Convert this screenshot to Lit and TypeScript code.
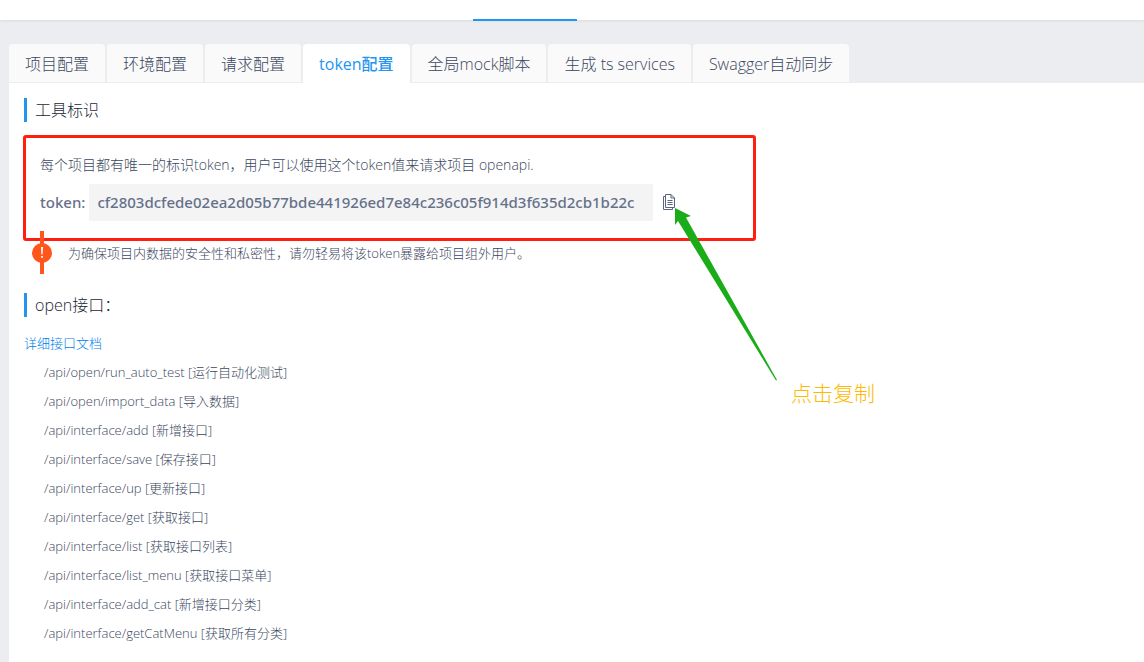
import { LitElement, html, css } from "lit";
import { customElement, state } from "lit/decorators.js";
import { classMap } from "lit/directives/class-map.js";

const TABS = [
  "项目配置",
  "环境配置",
  "请求配置",
  "token配置",
  "全局mock脚本",
  "生成 ts services",
  "Swagger自动同步",
];

const APIS: [string, string][] = [
  ["/api/open/run_auto_test", "运行自动化测试"],
  ["/api/open/import_data", "导入数据"],
  ["/api/interface/add", "新增接口"],
  ["/api/interface/save", "保存接口"],
  ["/api/interface/up", "更新接口"],
  ["/api/interface/get", "获取接口"],
  ["/api/interface/list", "获取接口列表"],
  ["/api/interface/list_menu", "获取接口菜单"],
  ["/api/interface/add_cat", "新增接口分类"],
  ["/api/interface/getCatMenu", "获取所有分类"],
];

const TOKEN = "cf2803dcfede02ea2d05b77bde441926ed7e84c236c05f914d3f635d2cb1b22c";

@customElement("token-panel")
class TokenPanel extends LitElement {
  static styles = css`
    :host {
      display: block;
      position: relative;
      padding: 15px;
      font-size: 13px;
      line-height: 20px;
    }
    .title {
      margin: 0;
      padding-left: 8px;
      border-left: 3px solid #2395f1;
      font-size: 16px;
      font-weight: 300;
      line-height: 24px;
      color: #1c2634;
    }
    .token-block {
      margin-top: 32px;
      padding-left: 16px;
    }
    .desc {
      margin: 0 0 8px;
      font-size: 14px;
      line-height: 22px;
    }
    .row {
      display: flex;
      align-items: center;
      max-width: 636px;
      font-family: "Noto Sans", "Noto Sans CJK SC", sans-serif;
      font-size: 15px;
      font-weight: 500;
      line-height: 37px;
      color: #65718a;
    }
    .value {
      flex: 1;
      margin: 0 9px 0 4px;
      padding: 0 8px;
      background: #f4f4f4;
    }
    .copy {
      display: flex;
      padding: 0;
      border: 0;
      background: none;
      color: #596680;
      cursor: pointer;
    }
    .warning {
      display: flex;
      align-items: center;
      gap: 16px;
      margin: 10px 0 19px;
      padding-left: 8px;
    }
    .warning svg {
      position: relative;
      z-index: 1;
    }
    .doc {
      display: block;
      width: fit-content;
      margin-top: 16px;
      color: #0080ec;
      text-decoration: none;
    }
    .list {
      display: grid;
      gap: 9px;
      margin: 9px 0 0;
      padding: 0 0 0 20px;
      list-style: none;
    }
    .frame {
      position: absolute;
      left: 14px;
      top: 52px;
      width: 727px;
      height: 100px;
      border: 3px solid #ff1e10;
      border-radius: 3px;
      pointer-events: none;
    }
    .arrow {
      position: absolute;
      left: 665px;
      top: 123px;
      pointer-events: none;
    }
    .note {
      position: absolute;
      left: 782px;
      top: 295px;
      font-size: 21px;
      line-height: 30px;
      color: #ffb900;
    }
  `;

  render() {
    return html`
      <h2 class="title">工具标识</h2>
      <div class="token-block">
        <p class="desc">每个项目都有唯一的标识token，用户可以使用这个token值来请求项目 openapi.</p>
        <div class="row">
          <span>token:</span>
          <span class="value">${TOKEN}</span>
          <button class="copy" aria-label="复制" @click=${() => navigator.clipboard?.writeText(TOKEN)}>
            <svg width="14" height="17" viewBox="0 0 14 17" fill="none" stroke="currentColor">
              <path d="M3.5 .5H9L12.5 4V13.5H3.5Z M9 .5V4H12.5 M3.5 2.5H1.5V15.5H10.5V13.5 M5.5 6.5H10.5 M5.5 8.5H10.5 M5.5 10.5H10.5" />
            </svg>
          </button>
        </div>
      </div>
      <div class="warning">
        <svg width="20" height="43" viewBox="0 0 20 43" aria-hidden="true">
          <path fill="#ff561b" d="M8 0H12V43H8Z" />
          <circle cx="10" cy="22" r="10" fill="#ff561b" />
          <path fill="#fff" d="M9 16H11L10.6 23.5H9.4Z M9.1 25H10.9V26.8H9.1Z" />
        </svg>
        <span>为确保项目内数据的安全性和私密性，请勿轻易将该token暴露给项目组外用户。</span>
      </div>
      <h2 class="title">open接口：</h2>
      <a class="doc" href="#doc">详细接口文档</a>
      <ul class="list">
        ${APIS.map(([path, name]) => html`<li>${path} [${name}]</li>`)}
      </ul>
      <div class="frame"></div>
      <svg class="arrow" width="106" height="176" viewBox="0 0 106 176" aria-hidden="true">
        <path fill="#1aad19" d="M1 2L17 10L12 11.5L103 174L102 174.500L4 15L1 19Z" />
      </svg>
      <span class="note">点击复制</span>
    `;
  }
}

@customElement("app-root")
class AppRoot extends LitElement {
  @state() active = 3;

  static styles = css`
    :host {
      display: flex;
      flex-direction: column;
      min-height: 100vh;
      background: #ecedf1;
      color: #3a4760;
      font-family: "Open Sans", "Noto Sans CJK SC", sans-serif;
      font-weight: 300;
    }
    .header {
      display: flex;
      height: 20px;
      padding-left: 473px;
      background: #fff;
      box-shadow: 0 1px 3px rgba(0, 0, 0, 0.07);
    }
    .ink {
      width: 104px;
      height: 2px;
      margin-top: 19px;
      background: #2395f1;
    }
    .page {
      display: flex;
      flex: 1;
      flex-direction: column;
      padding: 24px 0 0 9px;
    }
    .tabs {
      display: flex;
      gap: 2px;
    }
    .tab {
      margin-bottom: 1px;
      padding: 2px 16px 0;
      border: 0;
      border-radius: 4px 4px 0 0;
      background: #fafafa;
      color: inherit;
      font: inherit;
      font-size: 16px;
      line-height: 36px;
      white-space: nowrap;
      cursor: pointer;
    }
    .tab.active {
      margin-bottom: 0;
      padding-bottom: 1px;
      background: #fff;
      color: #2395f1;
      font-weight: 500;
    }
    .panel {
      flex: 1;
      background: #fff;
    }
  `;

  render() {
    return html`
      <header class="header"><div class="ink"></div></header>
      <main class="page">
        <div class="tabs" role="tablist">
          ${TABS.map(
            (label, i) => html`<button
              role="tab"
              class=${classMap({ tab: true, active: i === this.active })}
              aria-selected=${i === this.active ? "true" : "false"}
              @click=${() => (this.active = i)}
            >${label}</button>`
          )}
        </div>
        <token-panel class="panel" role="tabpanel"></token-panel>
      </main>
    `;
  }
}
